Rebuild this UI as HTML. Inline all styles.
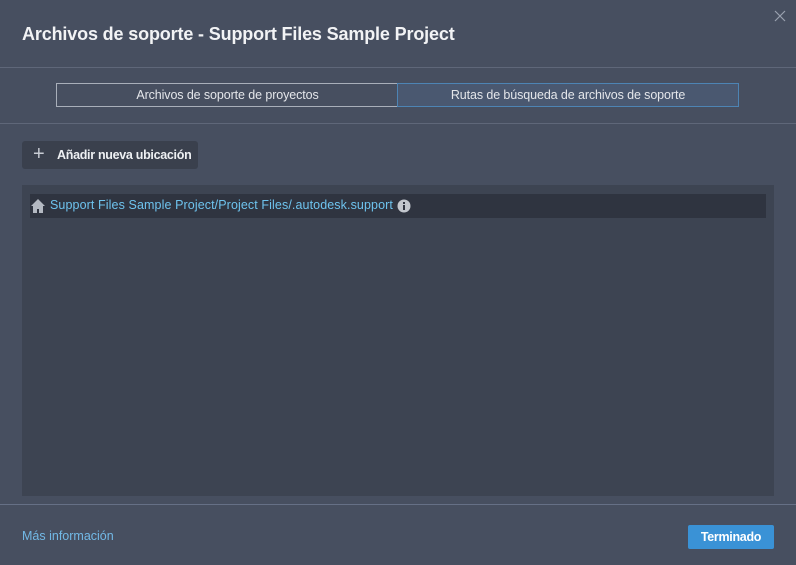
<!DOCTYPE html>
<html><head><style>
*{margin:0;padding:0;box-sizing:border-box}
body{width:796px;height:565px;background:#474f60;font-family:"Liberation Sans",sans-serif;position:relative;overflow:hidden;color:#e8eaee}
.a{position:absolute}
.title{left:22px;top:24px;font-size:18px;font-weight:bold;letter-spacing:-0.15px;color:#f2f3f5}
.hr{left:0;width:796px;height:1px;background:#5f6779}
.tab{top:83px;height:24px;font-size:12.5px;letter-spacing:-0.1px;text-align:center;line-height:22px;color:#e4e6ea}
.btn{left:22px;top:141px;width:176px;height:28px;background:#3a404d;border-radius:3px;font-size:12.5px;font-weight:bold;letter-spacing:-0.3px;line-height:28px;color:#eef0f3}
.panel{left:22px;top:185px;width:752px;height:311px;background:#3d4452}
.row{left:30px;top:194px;width:736px;height:24px;background:#2f3440}
</style></head><body>
<div class="a title">Archivos de soporte - Support Files Sample Project</div>
<svg class="a" style="left:774px;top:10px" width="12" height="12"><path d="M1 1L11 11M11 1L1 11" stroke="#9aa1af" stroke-width="1.2"/></svg>
<div class="a hr" style="top:67px"></div>
<div class="a tab" style="left:56px;width:342px;border:1px solid #a9afba;border-right:none">Archivos de soporte de proyectos</div>
<div class="a tab" style="left:397px;width:342px;border:1px solid #4d84b4;background:#4a5870">Rutas de búsqueda de archivos de soporte</div>
<div class="a hr" style="top:123px"></div>
<div class="a btn"><span style="position:absolute;left:11px;top:-1px;font-size:20px;font-weight:normal;color:#c8ccd4">+</span><span style="position:absolute;left:35px">Añadir nueva ubicación</span></div>
<div class="a panel"></div>
<div class="a row"></div>
<svg class="a" style="left:30px;top:198px" width="16" height="16"><path d="M8 1L1 8H3V15H7V11H9V15H13V8H15Z" fill="#b4b9c2"/></svg>
<div class="a" style="left:50px;top:198px;font-size:12.5px;letter-spacing:0.1px;color:#6ec3ee">Support Files Sample Project/Project Files/.autodesk.support</div>
<svg class="a" style="left:397px;top:199px" width="14" height="14"><circle cx="7" cy="7" r="6.5" fill="#c2c6cd"/><rect x="6" y="6" width="2" height="5" fill="#2f3440"/><rect x="6" y="3" width="2" height="2" fill="#2f3440"/></svg>
<div class="a hr" style="top:504px;background:#667086"></div>
<div class="a" style="left:22px;top:529px;font-size:12.5px;letter-spacing:0px;color:#72b9e6">Más información</div>
<div class="a" style="left:688px;top:525px;width:86px;height:24px;background:#3a92d6;border-radius:2px;font-size:12.5px;font-weight:bold;letter-spacing:-0.3px;text-align:center;line-height:24px;color:#fff">Terminado</div>
</body></html>
